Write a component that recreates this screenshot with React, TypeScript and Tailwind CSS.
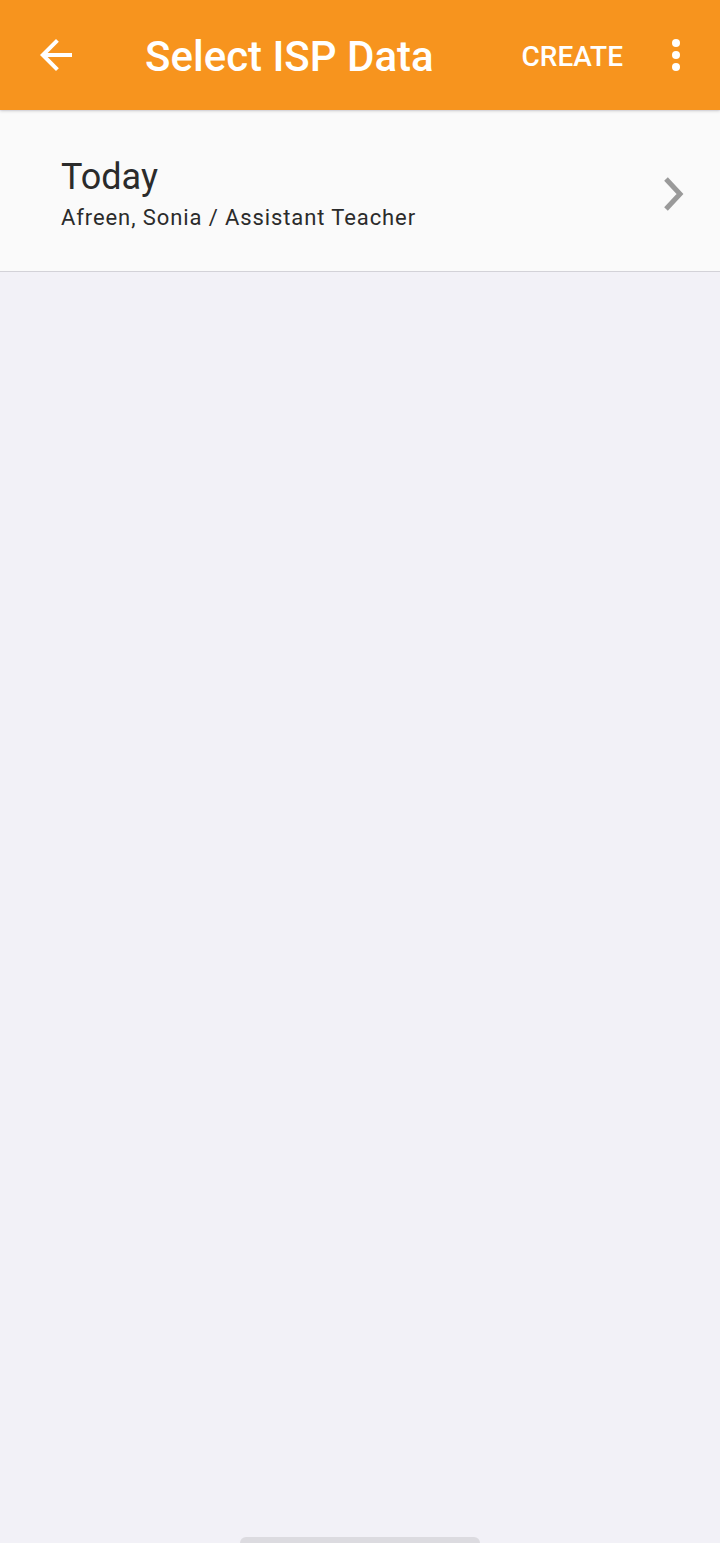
const font = { fontFamily: "Roboto, 'Liberation Sans', sans-serif" }

function BackIcon() {
  return (
    <svg viewBox="0 0 24 24" className="h-12 w-12" fill="white">
      <path d="M20 11H7.83l5.59-5.59L12 4l-8 8 8 8 1.41-1.41L7.83 13H20v-2z" />
    </svg>
  )
}

function MoreIcon() {
  return (
    <svg viewBox="0 0 24 24" className="h-12 w-12" fill="white">
      <circle cx="12" cy="6" r="2" />
      <circle cx="12" cy="12" r="2" />
      <circle cx="12" cy="18" r="2" />
    </svg>
  )
}

export default function App() {
  return (
    <div className="flex min-h-[1543px] flex-col bg-[#f2f1f7]" style={font}>
      {/* app bar */}
      <header className="relative z-10 flex h-[110px] items-center bg-[#f7941e] shadow-[0_1px_3px_rgba(0,0,0,0.18)]">
        <div className="ml-[32px] flex items-center">
          <BackIcon />
        </div>
        <h1 className="ml-[65px] mt-[4px] text-[42px] font-medium leading-none text-white">Select ISP Data</h1>
        <button className="ml-auto mt-[3px] text-[28px] font-medium leading-none text-white">CREATE</button>
        <div className="ml-[29px] mr-[20px] flex items-center">
          <MoreIcon />
        </div>
      </header>

      {/* list */}
      <div className="mt-px flex items-center border-b border-[#d3d2d8] bg-[#fafafa] pb-[40px] pl-[61px] pr-[34px] pt-[45px]">
        <div className="flex-1">
          <div className="text-[36px] leading-[42px] text-[#2b2b2b]">Today</div>
          <div className="mt-[7px] text-[22px] leading-[26px] tracking-[0.9px] text-[#2b2b2b]">Afreen, Sonia / Assistant Teacher</div>
        </div>
        <svg viewBox="0 0 24 36" className="h-[36px] w-[24px]" fill="none" stroke="#9a9a9a" strokeWidth="5">
          <path d="M4 3l14 15L4 33" />
        </svg>
      </div>

      <div className="mt-auto flex justify-center">
        <div className="h-[6px] w-[240px] rounded-t-full bg-[#dcdbe0]" />
      </div>
    </div>
  )
}
